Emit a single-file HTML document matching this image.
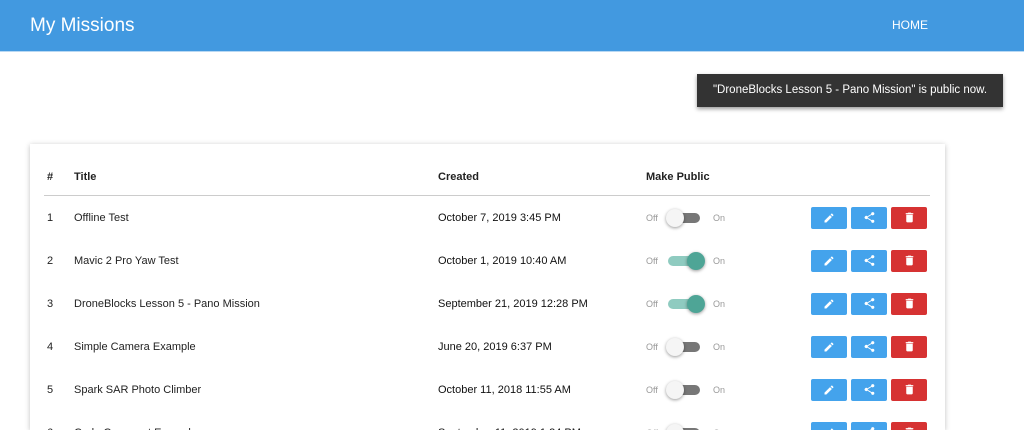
<!DOCTYPE html>
<html style="overflow:hidden;width:1024px;height:430px"><head><style>
*{box-sizing:border-box;margin:0;padding:0}
body{width:1024px;height:430px;overflow:hidden;background:#fff;font-family:"Liberation Sans",sans-serif;position:relative}
.hdr{position:absolute;left:0;top:0;width:1024px;height:52px;background:#4299e0;border-bottom:1px solid #b8d8f3}
.hdr .t{position:absolute;left:30px;top:15px;color:#fff;font-size:19px}
.hdr .h{position:absolute;left:892px;top:18px;color:#fff;font-size:12px}
.toast{position:absolute;left:697px;top:74px;width:306px;height:33px;background:#333;color:#fff;font-size:11.5px;line-height:33px;text-align:center;box-shadow:0 2px 4px rgba(0,0,0,.4)}
.card{position:absolute;left:30px;top:144px;width:915px;height:286px;background:#fff;box-shadow:0 1px 5px rgba(0,0,0,.25)}
.row{position:absolute;left:0;width:915px;height:43px;font-size:11px;color:#222}
.row span{position:absolute;top:50%;transform:translateY(-50%)}
.line{position:absolute;left:14px;top:51px;width:886px;height:1px;background:#ccc}
.sm{font-size:9px;color:#999}
.dt{color:#111}
.tr{position:absolute;top:50%;margin-top:-5px;width:32px;height:10px;border-radius:5px}
.kn{position:absolute;top:50%;margin-top:-9px;width:18px;height:18px;border-radius:50%;box-shadow:0 1px 3px rgba(0,0,0,.4)}
.b{position:absolute;top:50%;margin-top:-11px;width:36px;height:22px;border-radius:2px;display:flex;align-items:center;justify-content:center}
</style></head><body>
<div class="hdr"><div class="t">My Missions</div><div class="h">HOME</div></div>
<div class="toast">"DroneBlocks Lesson 5 - Pano Mission" is public now.</div>
<div class="card">
<div class="row" style="top:11px;font-weight:bold"><span style="left:17px">#</span><span style="left:44px">Title</span><span style="left:408px">Created</span><span style="left:616px">Make Public</span></div>
<div class="line"></div>
</div>
<script>
const rows=[["1","Offline Test","October 7, 2019 3:45 PM",0],["2","Mavic 2 Pro Yaw Test","October 1, 2019 10:40 AM",1],["3","DroneBlocks Lesson 5 - Pano Mission","September 21, 2019 12:28 PM",1],["4","Simple Camera Example","June 20, 2019 6:37 PM",0],["5","Spark SAR Photo Climber","October 11, 2018 11:55 AM",0],["6","Code Comment Example","September 11, 2019 1:24 PM",0]];
const pen='<svg width="12" height="12" viewBox="0 0 24 24"><path fill="#fff" d="M3 17.25V21h3.75L17.8 9.94l-3.75-3.75L3 17.25zM20.7 7.04a1 1 0 000-1.41l-2.34-2.34a1 1 0 00-1.41 0l-1.83 1.83 3.75 3.75 1.83-1.83z"/></svg>';
const sh='<svg width="13" height="13" viewBox="0 0 24 24"><path fill="#fff" d="M18 16.08c-.76 0-1.44.3-1.96.77L8.91 12.7c.05-.23.09-.46.09-.7s-.04-.47-.09-.7l7.05-4.11A2.99 2.99 0 1015 5c0 .24.04.47.09.7L8.04 9.81a3 3 0 100 4.38l7.12 4.16c-.05.21-.08.43-.08.65A2.92 2.92 0 1018 16.08z"/></svg>';
const tr='<svg width="13" height="13" viewBox="0 0 24 24"><path fill="#fff" d="M6 19c0 1.1.9 2 2 2h8c1.1 0 2-.9 2-2V7H6v12zM19 4h-3.5l-1-1h-5l-1 1H5v2h14V4z"/></svg>';
const c=document.querySelector('.card');
rows.forEach((r,i)=>{const d=document.createElement('div');d.className='row';d.style.top=(52+i*43)+'px';
const on=r[3];
d.innerHTML=`<span style="left:17px">${r[0]}</span><span style="left:44px">${r[1]}</span><span class="dt" style="left:408px">${r[2]}</span><span class="sm" style="left:616px">Off</span><div class="tr" style="left:638px;background:${on?'#8fcbc0':'#777'}"></div><div class="kn" style="left:${on?657:636}px;background:${on?'#4ea596':'#f5f5f5'}"></div><span class="sm" style="left:683px">On</span><div class="b" style="left:781px;background:#44a3ec">${pen}</div><div class="b" style="left:821px;background:#44a3ec">${sh}</div><div class="b" style="left:861px;background:#d63232">${tr}</div>`;
c.appendChild(d);});
</script>
</body></html>
